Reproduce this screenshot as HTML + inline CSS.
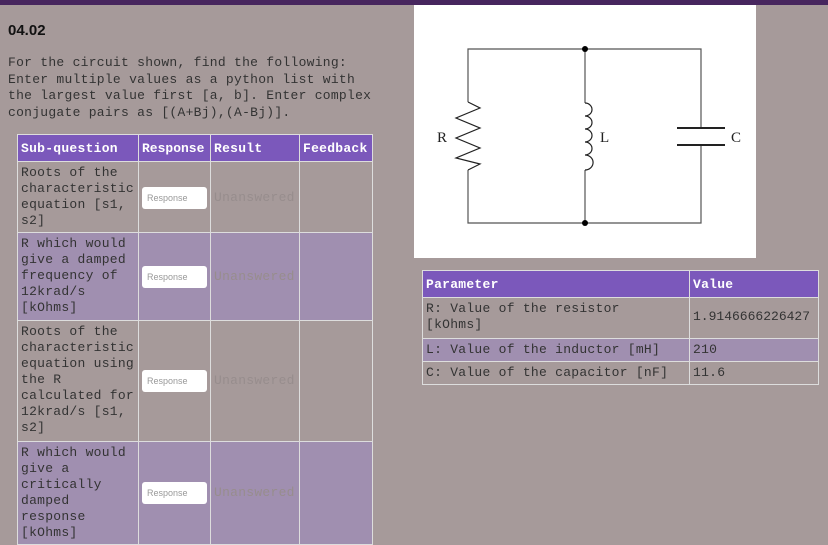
<!DOCTYPE html>
<html><head><style>
body{margin:0;width:828px;height:545px;background:#a69a9a;position:relative;overflow:hidden;font-family:"Liberation Mono",monospace;}
.bar{position:absolute;left:0;top:0;width:828px;height:5px;background:#47265e}
.t{position:absolute;left:8px;top:22px;font:bold 15px "Liberation Sans",sans-serif;color:#111}
.q{position:absolute;left:8px;top:55px;font-size:13px;letter-spacing:0.27px;line-height:16.7px;color:#333;white-space:pre}
.c{position:absolute;box-sizing:border-box;font-size:13px;letter-spacing:0.27px;line-height:16px;color:#333;border:1px solid #ddd;padding:3px 3px}
.h{background:#7b58bb;color:#fff;font-weight:bold;line-height:19px;padding-top:4px}
.p{background:#a08fb0}
.in{position:absolute;width:65px;height:22px;background:#fff;border-radius:3px;font:9px "Liberation Sans",sans-serif;color:#999;line-height:22px;box-sizing:border-box;padding-left:5px}
.u{position:absolute;font-size:13px;letter-spacing:0.27px;color:#978d8d}
</style></head><body>
<div class="bar"></div>
<div class="t">04.02</div>
<div class="q">For the circuit shown, find the following:
Enter multiple values as a python list with
the largest value first [a, b]. Enter complex
conjugate pairs as [(A+Bj),(A-Bj)].</div>

<div class="c h" style="left:17px;top:134px;width:122px;height:28px">Sub-question</div>
<div class="c h" style="left:138px;top:134px;width:73px;height:28px;padding-left:3px;letter-spacing:0">Response</div>
<div class="c h" style="left:210px;top:134px;width:90px;height:28px">Result</div>
<div class="c h" style="left:299px;top:134px;width:74px;height:28px">Feedback</div>

<div class="c" style="left:17px;top:161px;width:122px;height:72px">Roots of the characteristic equation [s1, s2]</div>
<div class="c" style="left:138px;top:161px;width:73px;height:72px"></div>
<div class="c" style="left:210px;top:161px;width:90px;height:72px"></div>
<div class="c" style="left:299px;top:161px;width:74px;height:72px"></div>

<div class="c p" style="left:17px;top:232px;width:122px;height:89px">R which would give a damped frequency of 12krad/s [kOhms]</div>
<div class="c p" style="left:138px;top:232px;width:73px;height:89px"></div>
<div class="c p" style="left:210px;top:232px;width:90px;height:89px"></div>
<div class="c p" style="left:299px;top:232px;width:74px;height:89px"></div>

<div class="c" style="left:17px;top:320px;width:122px;height:122px">Roots of the characteristic equation using the R calculated for 12krad/s [s1, s2]</div>
<div class="c" style="left:138px;top:320px;width:73px;height:122px"></div>
<div class="c" style="left:210px;top:320px;width:90px;height:122px"></div>
<div class="c" style="left:299px;top:320px;width:74px;height:122px"></div>

<div class="c p" style="left:17px;top:441px;width:122px;height:104px">R which would give a critically damped response [kOhms]</div>
<div class="c p" style="left:138px;top:441px;width:73px;height:104px"></div>
<div class="c p" style="left:210px;top:441px;width:90px;height:104px"></div>
<div class="c p" style="left:299px;top:441px;width:74px;height:104px"></div>

<div class="in" style="left:142px;top:187px">Response</div>
<div class="in" style="left:142px;top:266px">Response</div>
<div class="in" style="left:142px;top:370px">Response</div>
<div class="in" style="left:142px;top:482px">Response</div>
<div class="u" style="left:214px;top:190px">Unanswered</div>
<div class="u" style="left:214px;top:269px">Unanswered</div>
<div class="u" style="left:214px;top:373px">Unanswered</div>
<div class="u" style="left:214px;top:485px">Unanswered</div>

<svg style="position:absolute;left:414px;top:5px" width="342" height="253" viewBox="414 5 342 253">
<rect x="414" y="5" width="342" height="253" fill="#fff"/>
<g fill="none" stroke="#555" stroke-width="1.2">
<path d="M468 102 V49 H701 V128 M701 145 V223 H468 V170"/>
<path d="M468 102 L480 108 L456 118 L480 128 L456 138 L480 148 L456 158 L480 164 L468 170" stroke="#222"/>
<path d="M585 49 V103 M585 170 V223"/>
<path d="M585 103 a7 6.5 0 0 1 0 13 a7 6.5 0 0 1 0 13 a7 6.5 0 0 1 0 13 a7 6.5 0 0 1 0 13 a7 6.5 0 0 1 0 15" stroke="#222"/>
<path d="M677 128 H725 M677 145 H725" stroke="#222" stroke-width="2"/>
</g>
<circle cx="585" cy="49" r="3" fill="#000"/><circle cx="585" cy="223" r="3" fill="#000"/>
<g font-family="Liberation Serif,serif" font-size="15" fill="#222">
<text x="437" y="142">R</text><text x="600" y="142">L</text><text x="731" y="142">C</text></g>
</svg>

<div class="c h" style="left:422px;top:270px;width:268px;height:28px">Parameter</div>
<div class="c h" style="left:689px;top:270px;width:130px;height:28px">Value</div>
<div class="c" style="left:422px;top:297px;width:268px;height:42px;line-height:16px">R: Value of the resistor<br>[kOhms]</div>
<div class="c" style="left:689px;top:297px;width:130px;height:42px;line-height:32px;letter-spacing:0">1.9146666226427</div>
<div class="c p" style="left:422px;top:338px;width:268px;height:24px">L: Value of the inductor [mH]</div>
<div class="c p" style="left:689px;top:338px;width:130px;height:24px">210</div>
<div class="c" style="left:422px;top:361px;width:268px;height:24px">C: Value of the capacitor [nF]</div>
<div class="c" style="left:689px;top:361px;width:130px;height:24px">11.6</div>
</body></html>
